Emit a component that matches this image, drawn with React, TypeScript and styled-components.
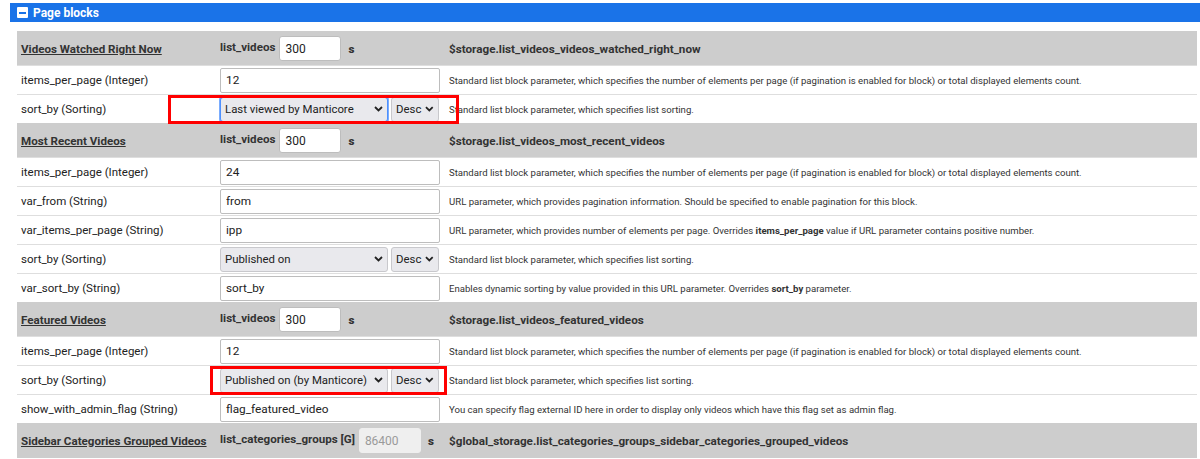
import styled, { createGlobalStyle } from 'styled-components';

const GlobalStyle = createGlobalStyle`
	body {
		margin: 0;
		background: #fff;
		font-family: Roboto, 'Liberation Sans', sans-serif;
		color: #222;
	}
`;

const Page = styled.div`
	padding: 3px 0 0 10px;
`;

const SectionBar = styled.div`
	height: 19px;
	background: #1a73e8;
	display: flex;
	align-items: center;
	gap: 5px;
	padding-left: 7px;
	color: #fff;
	font-size: 12px;
	font-weight: 700;
`;

const Toggle = styled.span`
	width: 11px;
	height: 11px;
	background: #fff;
	border-radius: 1px;
	display: flex;
	align-items: center;
	justify-content: center;

	&::after {
		content: '';
		width: 7px;
		height: 2px;
		background: #1a73e8;
	}
`;

const Body = styled.div`
	position: relative;
	margin: 9px 3px 0 7px;
`;

const Table = styled.table`
	width: 100%;
	border-collapse: collapse;
	table-layout: fixed;
`;

const Row = styled.tr<{ $head?: boolean }>`
	height: ${(p) => (p.$head ? '34px' : '29px')};
	background: ${(p) => (p.$head ? '#cdcdcd' : '#fff')};
	border-top: 1px solid ${(p) => (p.$head ? '#cdcdcd' : '#dedede')};
`;

const Cell = styled.td`
	padding: 0 4px;
	font-size: 11.5px;
	vertical-align: middle;
	white-space: nowrap;
`;

const BlockName = styled.span`
	font-weight: 700;
	font-size: 11.6px;
	text-decoration: underline;
	color: #333;
`;

const BlockType = styled.div`
	display: flex;
	align-items: center;
	gap: 4px;
	font-weight: 700;
	font-size: 11.6px;
	color: #333;
	margin-left: 3px;

	span {
		margin-bottom: 4px;
	}

	b {
		margin-left: 1px;
	}
`;

const CacheInput = styled.input<{ $disabled?: boolean }>`
	width: 62px;
	height: 25px;
	box-sizing: border-box;
	border: 1px solid ${(p) => (p.$disabled ? '#efefef' : '#bdbdbd')};
	background: ${(p) => (p.$disabled ? '#efefef' : '#fff')};
	color: ${(p) => (p.$disabled ? '#9a9a9a' : '#222')};
	border-radius: 3px;
	padding: 0 5px;
	font-family: inherit;
	font-size: 12px;
	margin-right: 2px;
`;

const StorageName = styled.span`
	font-weight: 700;
	font-size: 11.7px;
	color: #333;
`;

const TextInput = styled.input`
	width: 220px;
	height: 25px;
	box-sizing: border-box;
	border: 1px solid #bdbdbd;
	border-radius: 2px;
	padding: 0 5px;
	font-family: inherit;
	font-size: 11.8px;
	color: #222;
	margin-left: 3px;
	display: block;
`;

const SelectGroup = styled.div`
	display: flex;
	gap: 3px;
	margin-left: 3px;
`;

const Select = styled.div<{ $w: number; $focus?: boolean }>`
	width: ${(p) => p.$w}px;
	height: 25px;
	box-sizing: border-box;
	background: #e9e9ed;
	border: 1px solid ${(p) => (p.$focus ? '#4d90fe' : '#c8c8cc')};
	box-shadow: ${(p) => (p.$focus ? '0 0 0 1px #7aacfe' : 'none')};
	border-radius: 3px;
	display: flex;
	align-items: center;
	justify-content: space-between;
	gap: 4px;
	padding: 0 4px;
	font-size: 11.4px;
	color: #222;
`;

const Desc = styled.span`
	font-size: 9.6px;
	color: #333;

	b {
		font-weight: 700;
	}
`;

const Highlight = styled.div<{ $top: number; $left: number; $w: number; $h: number }>`
	position: absolute;
	top: ${(p) => p.$top}px;
	left: ${(p) => p.$left}px;
	width: ${(p) => p.$w}px;
	height: ${(p) => p.$h}px;
	box-sizing: border-box;
	border: 3px solid #f00;
	pointer-events: none;
`;

function Chevron() {
	return (
		<svg width="9" height="6" viewBox="0 0 9 6">
			<path d="M1 1 L4.5 4.5 L8 1" fill="none" stroke="#222" strokeWidth="1.8" />
		</svg>
	);
}

type Param =
	| { kind: 'text'; label: string; value: string; desc: React.ReactNode }
	| { kind: 'sort'; label: string; value: string; focus?: boolean; desc: React.ReactNode };

interface Block {
	name: string;
	type: string;
	cache: string;
	disabled?: boolean;
	storage: string;
	params: Param[];
}

const perPage =
	'Standard list block parameter, which specifies the number of elements per page (if pagination is enabled for block) or total displayed elements count.';
const sortDesc = 'Standard list block parameter, which specifies list sorting.';

const blocks: Block[] = [
	{
		name: 'Videos Watched Right Now',
		type: 'list_videos',
		cache: '300',
		storage: '$storage.list_videos_videos_watched_right_now',
		params: [
			{ kind: 'text', label: 'items_per_page (Integer)', value: '12', desc: perPage },
			{ kind: 'sort', label: 'sort_by (Sorting)', value: 'Last viewed by Manticore', focus: true, desc: sortDesc },
		],
	},
	{
		name: 'Most Recent Videos',
		type: 'list_videos',
		cache: '300',
		storage: '$storage.list_videos_most_recent_videos',
		params: [
			{ kind: 'text', label: 'items_per_page (Integer)', value: '24', desc: perPage },
			{
				kind: 'text',
				label: 'var_from (String)',
				value: 'from',
				desc: 'URL parameter, which provides pagination information. Should be specified to enable pagination for this block.',
			},
			{
				kind: 'text',
				label: 'var_items_per_page (String)',
				value: 'ipp',
				desc: (
					<>
						URL parameter, which provides number of elements per page. Overrides <b>items_per_page</b> value if URL
						parameter contains positive number.
					</>
				),
			},
			{ kind: 'sort', label: 'sort_by (Sorting)', value: 'Published on', desc: sortDesc },
			{
				kind: 'text',
				label: 'var_sort_by (String)',
				value: 'sort_by',
				desc: (
					<>
						Enables dynamic sorting by value provided in this URL parameter. Overrides <b>sort_by</b> parameter.
					</>
				),
			},
		],
	},
	{
		name: 'Featured Videos',
		type: 'list_videos',
		cache: '300',
		storage: '$storage.list_videos_featured_videos',
		params: [
			{ kind: 'text', label: 'items_per_page (Integer)', value: '12', desc: perPage },
			{ kind: 'sort', label: 'sort_by (Sorting)', value: 'Published on (by Manticore)', desc: sortDesc },
			{
				kind: 'text',
				label: 'show_with_admin_flag (String)',
				value: 'flag_featured_video',
				desc: 'You can specify flag external ID here in order to display only videos which have this flag set as admin flag.',
			},
		],
	},
	{
		name: 'Sidebar Categories Grouped Videos',
		type: 'list_categories_groups [G]',
		cache: '86400',
		disabled: true,
		storage: '$global_storage.list_categories_groups_sidebar_categories_grouped_videos',
		params: [],
	},
];

function App() {
	return (
		<Page>
			<GlobalStyle />
			<SectionBar>
				<Toggle />
				Page blocks
			</SectionBar>
			<Body>
				<Table>
					<colgroup>
						<col style={{ width: 196 }} />
						<col style={{ width: 232 }} />
						<col />
					</colgroup>
					<tbody>
						{blocks.map((block) => (
							<>
								<Row $head key={block.name}>
									<Cell>
										<BlockName>{block.name}</BlockName>
									</Cell>
									<Cell>
										<BlockType>
											<span>{block.type}</span>
											<CacheInput
												value={block.cache}
												readOnly
												disabled={block.disabled}
												$disabled={block.disabled}
											/>
											<b>s</b>
										</BlockType>
									</Cell>
									<Cell>
										<StorageName>{block.storage}</StorageName>
									</Cell>
								</Row>
								{block.params.map((param) => (
									<Row key={block.name + param.label}>
										<Cell>{param.label}</Cell>
										<Cell>
											{param.kind === 'text' ? (
												<TextInput value={param.value} readOnly />
											) : (
												<SelectGroup>
													<Select $w={168} $focus={param.focus}>
														{param.value}
														<Chevron />
													</Select>
													<Select $w={48}>
														Desc
														<Chevron />
													</Select>
												</SelectGroup>
											)}
										</Cell>
										<Cell>
											<Desc>{param.desc}</Desc>
										</Cell>
									</Row>
								))}
							</>
						))}
					</tbody>
				</Table>
				<Highlight $top={64} $left={151} $w={291} $h={29} />
				<Highlight $top={335} $left={193} $w={237} $h={29} />
			</Body>
		</Page>
	);
}

export default App;
